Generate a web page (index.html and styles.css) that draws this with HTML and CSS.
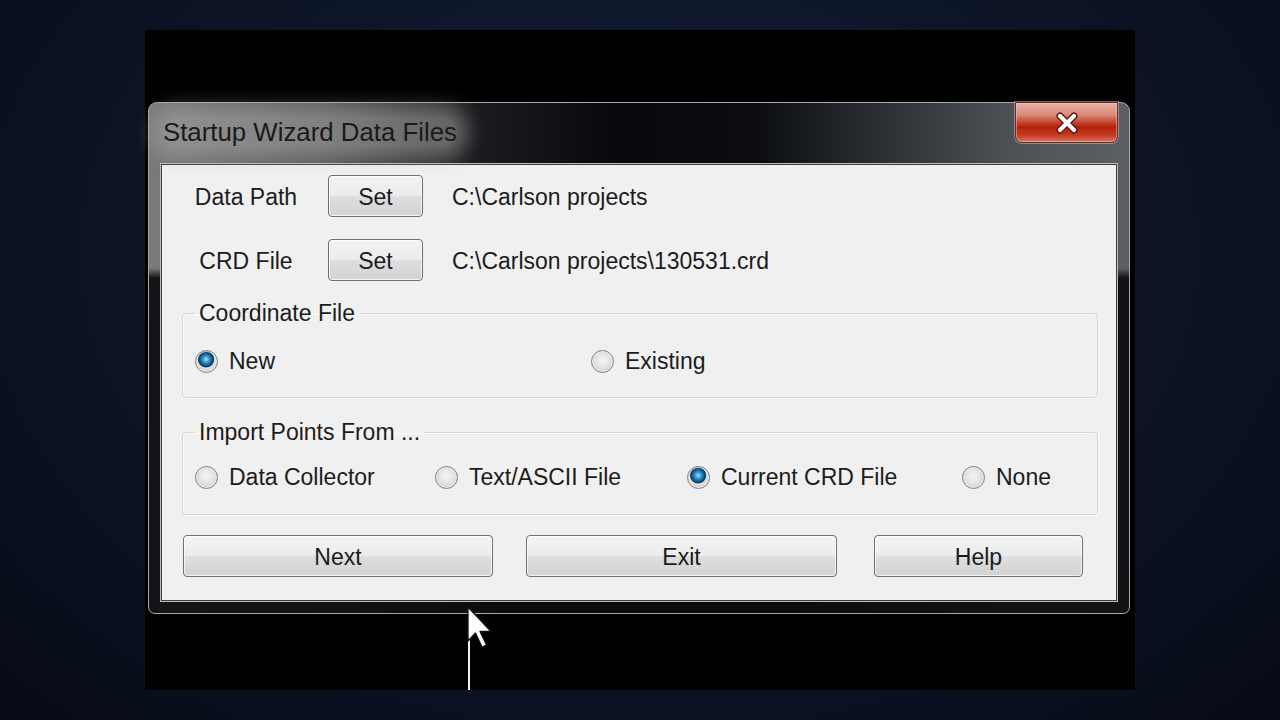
FILE: index.html
```html
<!DOCTYPE html>
<html lang="en">
<head>
  <meta charset="UTF-8">
  <title>Startup Wizard Data Files</title>
  <link rel="stylesheet" href="styles.css">
</head>
<body>
  <div class="stage">
    <div class="window">
      <div class="titlebar">
        <span class="title">Startup Wizard Data Files</span>
        <button class="close" type="button" aria-label="Close">
          <svg width="26" height="22" viewBox="0 0 26 22">
            <path d="M6 4 L20 18 M20 4 L6 18" stroke="#5a1a12" stroke-width="7" stroke-linecap="round"/>
            <path d="M6 4 L20 18 M20 4 L6 18" stroke="#ffffff" stroke-width="4.2" stroke-linecap="round"/>
          </svg>
        </button>
      </div>

      <div class="client">
        <div class="row">
          <span class="row-label">Data Path</span>
          <button class="btn btn-set" type="button">Set</button>
          <span class="path">C:\Carlson projects</span>
        </div>
        <div class="row row-2">
          <span class="row-label">CRD File</span>
          <button class="btn btn-set" type="button">Set</button>
          <span class="path">C:\Carlson projects\130531.crd</span>
        </div>

        <fieldset class="group group-coord">
          <legend>Coordinate File</legend>
          <div class="options">
            <label class="opt"><input type="radio" name="coord" checked> New</label>
            <label class="opt"><input type="radio" name="coord"> Existing</label>
          </div>
        </fieldset>

        <fieldset class="group group-import">
          <legend>Import Points From ...</legend>
          <div class="options">
            <label class="opt"><input type="radio" name="import"> Data Collector</label>
            <label class="opt"><input type="radio" name="import"> Text/ASCII File</label>
            <label class="opt"><input type="radio" name="import" checked> Current CRD File</label>
            <label class="opt"><input type="radio" name="import"> None</label>
          </div>
        </fieldset>

        <div class="actions">
          <button class="btn btn-next" type="button">Next</button>
          <button class="btn btn-exit" type="button">Exit</button>
          <button class="btn btn-help" type="button">Help</button>
        </div>
      </div>
    </div>
  </div>

  <svg class="cursor" width="30" height="88" viewBox="0 0 30 88">
    <rect x="2" y="30" width="2" height="55" fill="#f4f4f4"/>
    <path d="M2 2 L2 36 L9.5 28 L16 42 L20.5 40 L14 26.5 L25 26.5 Z" fill="#ffffff" stroke="#111" stroke-width="1.3" stroke-linejoin="round"/>
  </svg>
</body>
</html>
```

FILE: styles.css
```css
* {
  box-sizing: border-box;
}
body {
  margin: 0;
  width: 1280px;
  height: 720px;
  overflow: hidden;
  position: relative;
  padding: 30px 0 0 145px;
  font-family: "Liberation Sans", Arial, sans-serif;
  background: radial-gradient(ellipse at 50% 35%, #15213a 0%, #0c1426 55%, #070b16 100%);
  color: #1c1c1c;
}
.stage {
  width: 990px;
  height: 660px;
  background: #000;
  padding: 72px 0 0 3px;
}
.window {
  width: 982px;
  border: 1px solid #a9a9a9;
  border-radius: 9px 9px 7px 7px;
  padding: 0 12px 12px 12px;
  background:
    linear-gradient(to bottom, rgba(0, 0, 0, 0) 0, rgba(0, 0, 0, 0) 165px, rgba(12, 12, 14, 0.92) 175px, rgba(12, 12, 14, 0.92) 100%),
    linear-gradient(90deg, #7a7a7a 0%, #5a5a5a 18%, #1a1b1e 34%, #08090c 48%, #0b0d11 62%, #2c2f33 75%, #4e5256 88%, #5c6064 100%);
}
.titlebar {
  display: flex;
  align-items: flex-start;
  height: 61px;
  margin: 0 -1px 0 -11px;
  padding-left: 13px;
}
.title {
  margin-top: 14px;
  font-size: 25.8px;
  line-height: 30px;
  color: #1a1a1a;
  background: rgba(175, 175, 175, 0.45);
  border-radius: 14px;
  box-shadow: 0 0 18px 11px rgba(175, 175, 175, 0.45);
}
.close {
  margin: -1px 0 0 auto;
  width: 103px;
  height: 41px;
  padding: 0;
  border: 1px solid #6b2a20;
  border-radius: 0 0 7px 7px;
  display: flex;
  align-items: center;
  justify-content: center;
  background: linear-gradient(to bottom, #e7b2a8 0%, #d88c7c 30%, #c4452e 50%, #b3200c 62%, #c43a22 82%, #d8765f 100%);
  box-shadow: inset 0 0 0 1px rgba(255, 210, 200, 0.45), 0 0 0 1px rgba(200, 200, 200, 0.5);
}
.client {
  background: #f0f0f0;
  border: 1px solid #3d3d3d;
  box-shadow: 0 0 0 1px #bdbdbd;
  padding: 10px 18px 23px 20px;
}
.row {
  display: flex;
  align-items: center;
  height: 42px;
}
.row-2 {
  margin-top: 22px;
}
.row-label {
  width: 128px;
  text-align: center;
  font-size: 23px;
  padding-top: 3px;
}
.btn {
  font-family: "Liberation Sans", Arial, sans-serif;
  font-size: 23px;
  color: #1c1c1c;
  height: 42px;
  padding: 2px 0 0 0;
  border: 1px solid #707070;
  border-radius: 4px;
  background: linear-gradient(to bottom, #f4f4f4 0%, #ececec 48%, #dedede 52%, #d2d2d2 100%);
  box-shadow: inset 0 0 0 1px rgba(255, 255, 255, 0.7);
}
.btn-set {
  width: 95px;
  margin-left: 18px;
}
.path {
  margin-left: 29px;
  font-size: 23px;
  padding-top: 3px;
}
.group {
  margin: 19px 0 0 0;
  border: 1px solid #d6d6d6;
  border-radius: 4px;
  box-shadow: inset 1px 1px 0 #fafafa, 1px 1px 0 #fafafa;
  padding: 22px 12px 23px 12px;
}
.group legend {
  font-size: 23px;
  line-height: 26px;
  padding: 0 4px;
}
.group-import {
  margin-top: 21px;
  padding-top: 19px;
  padding-bottom: 24px;
}
.options {
  display: grid;
  align-items: center;
  height: 26px;
}
.group-coord .options {
  grid-template-columns: 396px auto;
}
.group-import .options {
  grid-template-columns: 240px 252px 275px auto;
}
.opt {
  display: flex;
  align-items: center;
  font-size: 23px;
  white-space: nowrap;
}
.opt input {
  appearance: none;
  -webkit-appearance: none;
  width: 23px;
  height: 23px;
  margin: 0 11px 0 0;
  border-radius: 50%;
  border: 1px solid #808080;
  background: radial-gradient(circle at 50% 45%, #f4f4f4 0%, #e4e4e4 45%, #cfcfcf 75%, #ededed 100%);
  box-shadow: inset 0 0 0 1px rgba(255, 255, 255, 0.6);
}
.opt input:checked {
  background:
    radial-gradient(circle at 48% 40%, #a9e0f7 0px, #3d9bd0 3px, #0d5a8c 6px, #083a5c 7.5px, rgba(8, 58, 92, 0) 8.5px),
    radial-gradient(circle at 50% 45%, #f4f4f4 0%, #e4e4e4 45%, #cfcfcf 75%, #ededed 100%);
}
.actions {
  display: flex;
  margin-top: 20px;
}
.btn-next {
  width: 310px;
  margin-left: 1px;
}
.btn-exit {
  width: 311px;
  margin-left: 33px;
}
.btn-help {
  width: 209px;
  margin-left: 37px;
}
.cursor {
  position: absolute;
  left: 466px;
  top: 605px;
}
```
